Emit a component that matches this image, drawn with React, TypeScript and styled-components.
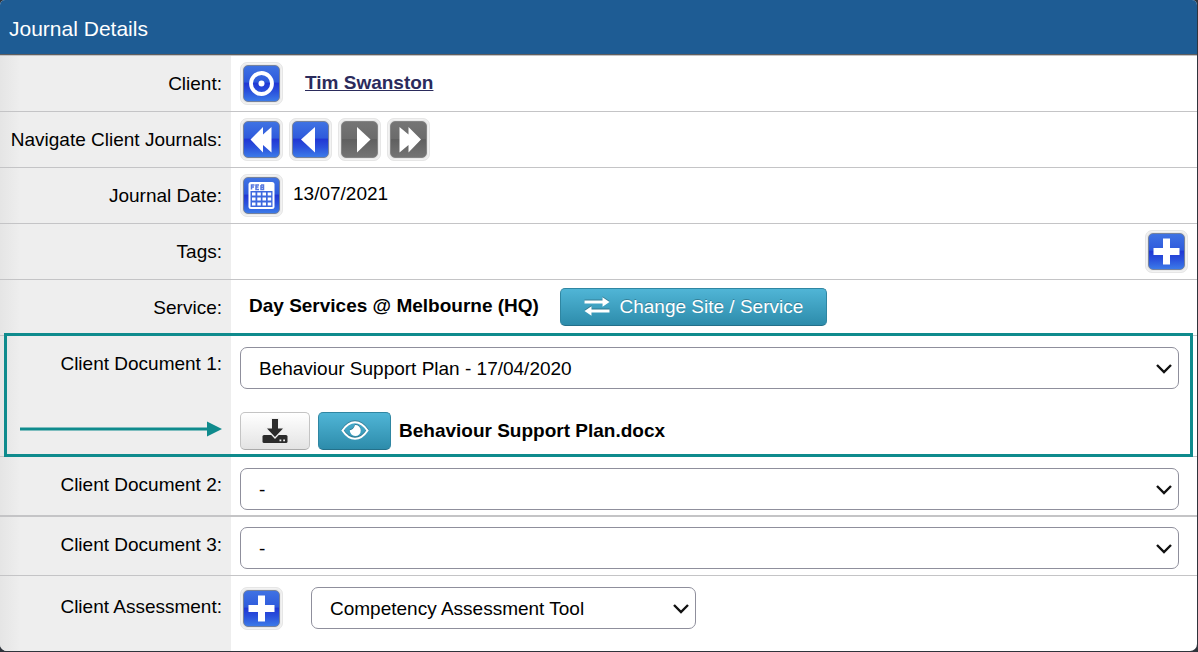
import React from "react";
import styled, { createGlobalStyle, css } from "styled-components";

const GlobalStyle = createGlobalStyle`
  * { box-sizing: border-box; }
  body {
    margin: 0;
    background: #2f343c;
    color: #000;
    font-family: "Liberation Sans", Arial, Helvetica, sans-serif;
    font-size: 19px;
    line-height: 24px;
  }
`;

const teal = "#0f8b8d";

const Panel = styled.main`
  margin: 0 1px 1px 0;
  background: #fff;
  border-radius: 5px 5px 7px 7px;
  overflow: hidden;
`;

const PanelHeader = styled.header`
  height: 55px;
  padding: 16px 9px 0;
  background: #1e5c94;
  border-bottom: 1px solid #5f5f60;
  color: #fff;
`;

const Title = styled.h1`
  margin: 0;
  font-size: 21px;
  line-height: 26px;
  font-weight: 400;
`;

const Rows = styled.div`
  border-top: 1px solid #c4c4c6;
`;

const Row = styled.section<{ $ruled?: boolean; $last?: boolean }>`
  position: relative;
  display: grid;
  grid-template-columns: 231px minmax(0, 1fr);
  border-bottom: ${(p) => (p.$last ? "0" : "1px solid #c4c4c6")};
  ${(p) => p.$ruled && css`border-top: 1px solid #c4c4c6;`}
`;

const LabelCell = styled.div<{ $top?: number }>`
  padding: ${(p) => p.$top ?? 16}px 9px 0 0;
  background: linear-gradient(90deg, #e5e5e5 0, #eee 20px);
  text-align: right;
  white-space: nowrap;
`;

const Content = styled.div<{ $pad?: string; $gap?: number; $end?: boolean }>`
  display: flex;
  align-items: flex-start;
  justify-content: ${(p) => (p.$end ? "flex-end" : "flex-start")};
  gap: ${(p) => p.$gap ?? 6}px;
  padding: ${(p) => p.$pad ?? "6px 9px"};
`;

const Stack = styled.div`
  display: flex;
  flex-direction: column;
  gap: 23px;
  padding: 11px 18px 6px 9px;
`;

const FileLine = styled.div`
  display: flex;
  align-items: center;
  gap: 8px;
`;

const Tile = styled.button`
  flex: none;
  width: 43px;
  height: 43px;
  padding: 3px;
  border: 1px solid #e6e6e6;
  border-radius: 7px;
  background: #e9e9e9;
  box-shadow: inset 0 0 0 1px #f3f3f3;
`;

const TileFace = styled.span<{ $muted?: boolean }>`
  display: block;
  width: 37px;
  height: 37px;
  margin: -1px;
  border: 1px solid ${(p) => (p.$muted ? "#858585" : "#75829d")};
  border-radius: 5px;
  background: ${(p) =>
    p.$muted
      ? "linear-gradient(#757575 0, #6b6b6b 48%, #606060 50%, #747474 100%)"
      : "linear-gradient(#3f72e3 0, #2f5bdc 45%, #2138d4 50%, #2a50dc 72%, #3c7ae8 100%)"};

  svg { display: block; width: 35px; height: 35px; }
`;

const ClientLink = styled.a`
  margin-top: 9px;
  color: #2b2b5c;
  font-weight: 700;
`;

const Value = styled.span`
  margin-top: 8px;
`;

const Strong = styled.strong<{ $top?: number }>`
  padding-top: ${(p) => p.$top ?? 0}px;
  white-space: nowrap;
`;

const Button = styled.button<{ $primary?: boolean; $width: number }>`
  display: flex;
  align-items: center;
  justify-content: center;
  gap: 10px;
  flex: none;
  width: ${(p) => p.$width}px;
  height: 38px;
  padding: 0;
  border: 1px solid ${(p) => (p.$primary ? "#2f86a2" : "#c4c4c4")};
  border-bottom-color: ${(p) => (p.$primary ? "#24708a" : "#aaa")};
  border-radius: 5px;
  background: ${(p) =>
    p.$primary ? "linear-gradient(#50b5d6, #2d8cab)" : "linear-gradient(#fff, #e3e3e3)"};
  color: ${(p) => (p.$primary ? "#fff" : "#2b2b2b")};
  font: inherit;
  white-space: nowrap;
  text-shadow: ${(p) => (p.$primary ? "0 -1px 0 rgba(0, 0, 0, 0.25)" : "none")};

  svg { filter: ${(p) => (p.$primary ? "drop-shadow(0 -1px 0 rgba(0, 0, 0, 0.25))" : "none")}; }
`;

const SelectBox = styled.div<{ $width?: number }>`
  position: relative;
  width: ${(p) => (p.$width ? `${p.$width}px` : "100%")};

  select {
    display: block;
    width: 100%;
    height: 42px;
    padding: 1px 40px 0 18px;
    border: 1px solid #8f8f9c;
    border-radius: 7px;
    background: #fff;
    color: #000;
    font: inherit;
    appearance: none;
  }

  svg {
    position: absolute;
    top: 16px;
    right: 7px;
    pointer-events: none;
  }
`;

const Highlight = styled.div`
  position: absolute;
  top: -3px;
  right: 4px;
  bottom: -1px;
  left: 4px;
  z-index: 1;
  border: 3px solid ${teal};
  pointer-events: none;
`;

const Pointer = styled.svg`
  position: absolute;
  left: 13px;
  bottom: 17px;
`;

function Select({ id, options, width }: { id: string; options: string[]; width?: number }) {
  return (
    <SelectBox $width={width}>
      <select id={id} defaultValue={options[0]}>
        {options.map((o) => (
          <option key={o}>{o}</option>
        ))}
      </select>
      <svg width="16" height="12" viewBox="0 0 16 12" fill="none" stroke="#111" strokeWidth="2.4" aria-hidden="true">
        <path d="M1 2 L8 9 L15 2" />
      </svg>
    </SelectBox>
  );
}

function IconTile({ label, muted, children }: { label: string; muted?: boolean; children: React.ReactNode }) {
  return (
    <Tile type="button" aria-label={label} disabled={muted}>
      <TileFace $muted={muted}>
        <svg viewBox="0 0 35 35" fill="#fff" aria-hidden="true">{children}</svg>
      </TileFace>
    </Tile>
  );
}

const Plus = () => <path d="M14 4.500h7v9.500h9.500v7H21v9.500h-7V21H4.500v-7H14z" />;

const doc1 = "Behaviour Support Plan - 17/04/2020";

export default function App() {
  return (
    <>
      <GlobalStyle />
      <Panel>
        <PanelHeader>
          <Title>Journal Details</Title>
        </PanelHeader>
        <Rows>
          <Row>
            <LabelCell>Client:</LabelCell>
            <Content $gap={22}>
              <IconTile label="Open client">
                <circle cx="17.500" cy="17.500" r="10.500" fill="none" stroke="#fff" strokeWidth="3.800" />
                <circle cx="17.500" cy="17.500" r="3" />
              </IconTile>
              <ClientLink href="#client">Tim Swanston</ClientLink>
            </Content>
          </Row>
          <Row>
            <LabelCell>Navigate Client Journals:</LabelCell>
            <Content>
              <IconTile label="First journal">
                <path d="M6.500 17.500 L19 5 V12.500 L27.500 5 V30.500 L19 23 V30.500 Z" />
              </IconTile>
              <IconTile label="Previous journal">
                <path d="M8 17.500 L22 5 V30.500 Z" />
              </IconTile>
              <IconTile label="Next journal" muted>
                <path d="M28.500 17.500 L15 5 V30.500 Z" />
              </IconTile>
              <IconTile label="Last journal" muted>
                <path d="M30 17.500 L17.500 5 V12.500 L8.500 5 V30.500 L17.500 23 V30.500 Z" />
              </IconTile>
            </Content>
          </Row>
          <Row>
            <LabelCell>Journal Date:</LabelCell>
            <Content $gap={10}>
              <IconTile label="Pick journal date">
                <rect x="4.500" y="4" width="26" height="27" rx="2.500" />
                <g fill="none" stroke="#5577df" strokeWidth="1.500">
                  <path d="M7.500 11.500V7H10.500M7.500 9H10M15 7H12V11.500H15M12 9H14.500M17 7V11.500H19.500V7H17M17 9.200H19.500" />
                </g>
                <path fill="#3d68de" d="M6.500 13h22v16h-22z" />
                <path d="M8 14.500h3.500v3H8zM13.300 14.500h3.500v3h-3.500zM18.500 14.500h3.500v3h-3.500zM23.700 14.500h3.500v3h-3.500zM8 19.500h3.500v3H8zM13.300 19.500h3.500v3h-3.500zM18.500 19.500h3.500v3h-3.500zM23.700 19.500h3.500v3h-3.500zM8 24.500h3.500v3H8zM13.300 24.500h3.500v3h-3.500zM18.500 24.500h3.500v3h-3.500zM23.700 24.500h3.500v3h-3.500z" />
              </IconTile>
              <Value>13/07/2021</Value>
            </Content>
          </Row>
          <Row>
            <LabelCell>Tags:</LabelCell>
            <Content $end>
              <IconTile label="Add tag"><Plus /></IconTile>
            </Content>
          </Row>
          <Row>
            <LabelCell>Service:</LabelCell>
            <Content $gap={21} $pad="8px 18px 9px">
              <Strong $top={6}>Day Services @ Melbourne (HQ)</Strong>
              <Button type="button" $primary $width={267}>
                <svg width="26" height="20" viewBox="0 0 26 20" fill="#fff" aria-hidden="true">
                  <path d="M.5 3.500h18V.3L25.500 5 18.500 9.700V6.500H.5zM25.500 12.500H7.500V9.300L.5 14 7.500 18.700V15.500h18z" />
                </svg>
                Change Site / Service
              </Button>
            </Content>
          </Row>
          <Row>
            <LabelCell><label htmlFor="doc1">Client Document 1:</label></LabelCell>
            <Stack>
              <Select id="doc1" options={[doc1, "-"]} />
              <FileLine>
                <Button type="button" aria-label="Download" $width={70}>
                  <svg width="26" height="26" viewBox="0 0 26 26" fill="currentColor" aria-hidden="true">
                    <rect x="0.500" y="17" width="25" height="8" rx="1.500" />
                    <path d="M10 1h6v9.500h5L13 19 5 10.500h5z" stroke="#f0f0f0" strokeWidth="2.600" />
                    <path d="M10 1h6v9.500h5L13 19 5 10.500h5z" />
                    <path fill="#f0f0f0" d="M17.500 21.500h1.800v1.800h-1.800zM21.200 21.500H23v1.800h-1.800z" />
                  </svg>
                </Button>
                <Button type="button" aria-label="View" $primary $width={73}>
                  <svg width="28" height="20" viewBox="0 0 28 20" fill="none" aria-hidden="true">
                    <path d="M1.500 9.500Q7 1.200 14 1.200T26.500 9.500Q21 17.800 14 17.800T1.500 9.500z" stroke="#fff" strokeWidth="2" />
                    <path d="M14 4A5.500 5.500 0 1 1 8.800 9.200Q12.500 9 14 4z" fill="#fff" />
                  </svg>
                </Button>
                <Strong>Behaviour Support Plan.docx</Strong>
              </FileLine>
            </Stack>
            <Highlight>
              <Pointer width="202" height="16" viewBox="0 0 202 16" fill={teal} aria-hidden="true">
                <path d="M0 6.500H187V0.500L202 8 187 15.500V9.500H0z" />
              </Pointer>
            </Highlight>
          </Row>
          <Row>
            <LabelCell><label htmlFor="doc2">Client Document 2:</label></LabelCell>
            <Content $pad="11px 18px 5px 9px"><Select id="doc2" options={["-", doc1]} /></Content>
          </Row>
          <Row $ruled>
            <LabelCell><label htmlFor="doc3">Client Document 3:</label></LabelCell>
            <Content $pad="10px 18px 6px 9px"><Select id="doc3" options={["-", doc1]} /></Content>
          </Row>
          <Row $last>
            <LabelCell $top={19}><label htmlFor="assessment">Client Assessment:</label></LabelCell>
            <Content $gap={28} $pad="11px 18px 21px 9px">
              <IconTile label="Add assessment"><Plus /></IconTile>
              <Select id="assessment" options={["Competency Assessment Tool"]} width={385} />
            </Content>
          </Row>
        </Rows>
      </Panel>
    </>
  );
}
